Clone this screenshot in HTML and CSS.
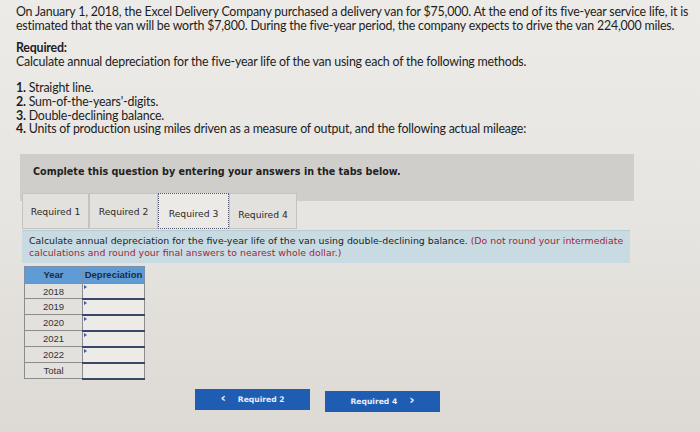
FILE: index.html
```html
<!DOCTYPE html>
<html>
<head>
<meta charset="utf-8">
<link rel="stylesheet" href="styles.css">
</head>
<body>
<div class="page">
  <div class="intro">
    <p class="para">On January 1, 2018, the Excel Delivery Company purchased a delivery van for $75,000. At the end of its five-year service life, it is<br>estimated that the van will be worth $7,800. During the five-year period, the company expects to drive the van 224,000 miles.</p>
    <p class="req"><b>Required:</b><br>Calculate annual depreciation for the five-year life of the van using each of the following methods.</p>
    <ol class="list">
      <li><b>1.</b> Straight line.</li>
      <li><b>2.</b> Sum-of-the-years'-digits.</li>
      <li><b>3.</b> Double-declining balance.</li>
      <li><b>4.</b> Units of production using miles driven as a measure of output, and the following actual mileage:</li>
    </ol>
  </div>
  <div class="banner">Complete this question by entering your answers in the tabs below.</div>
  <div class="tabs">
    <div class="tab">Required 1</div>
    <div class="tab">Required 2</div>
    <div class="tab active">Required 3</div>
    <div class="tab">Required 4</div>
  </div>
  <div class="instr">
    <div class="ln">Calculate annual depreciation for the five-year life of the van using double-declining balance. <span class="red">(Do not round your intermediate</span></div>
    <div class="ln red">calculations and round your final answers to nearest whole dollar.)</div>
  </div>
  <table class="grid">
    <thead><tr><th class="yr">Year</th><th class="dep">Depreciation</th></tr></thead>
    <tbody>
      <tr><td class="yr">2018</td><td class="in"><span class="flag"></span></td></tr>
      <tr><td class="yr">2019</td><td class="in"><span class="flag"></span></td></tr>
      <tr><td class="yr">2020</td><td class="in"><span class="flag"></span></td></tr>
      <tr><td class="yr">2021</td><td class="in"><span class="flag"></span></td></tr>
      <tr><td class="yr">2022</td><td class="in"><span class="flag"></span></td></tr>
      <tr><td class="yr">Total</td><td class="in"></td></tr>
    </tbody>
  </table>
  <div class="nav">
    <div class="btn"><span class="chev">&lsaquo;</span>Required 2</div>
    <div class="btn">Required 4<span class="chev r">&rsaquo;</span></div>
  </div>
</div>
</body>
</html>
```
FILE: styles.css
```css
html, body {
  margin: 0;
  padding: 0;
}
body {
  width: 700px;
  height: 432px;
  overflow: hidden;
  background: linear-gradient(180deg, #ecebe8 0%, #e7e5e1 50%, #ddd9d4 100%);
  font-family: "Lato", "Open Sans", sans-serif;
  color: #1d1d1d;
}
.page {
  padding: 5px 0 0 16px;
}
.intro {
  font-size: 12.4px;
  letter-spacing: -0.2px;
  line-height: 13.6px;
  width: 684px;
  white-space: nowrap;
}
.para {
  margin: 0;
}
.req {
  margin: 9px 0 0 0;
}
.list {
  list-style: none;
  margin: 13px 0 0 0;
  padding: 0;
}
.banner {
  margin: 18px 0 0 4px;
  width: 614px;
  height: 47px;
  box-sizing: border-box;
  padding: 12px 0 0 13px;
  background: #cfcecb;
  font-family: "DejaVu Sans", Verdana, sans-serif;
  font-weight: bold;
  font-size: 9.6px;
  color: #222;
}
.tabs {
  display: flex;
  margin: -8px 0 0 6px;
  height: 37px;
}
.tab {
  box-sizing: border-box;
  height: 36px;
  padding: 12px 0 0 0;
  text-align: center;
  border: 1px solid #c6c3bf;
  background: #e3e1dd;
  font-family: "DejaVu Sans", Verdana, sans-serif;
  font-size: 9.2px;
  color: #2a2a2a;
}
.tab:nth-child(1) { width: 67px; }
.tab:nth-child(2) { width: 69px; }
.tab:nth-child(3) { width: 71px; }
.tab:nth-child(4) { width: 68px; padding-top: 15px; }
.tab.active {
  border: 1.5px dotted #555a70;
  background: #eceae6;
  padding-top: 14px;
}
.instr {
  margin: 0 0 0 6px;
  width: 608px;
  box-sizing: border-box;
  padding: 4px 6px 4px 7px;
  background: #c9dbe2;
  border-top: 1px solid #b9ccd4;
  font-family: "DejaVu Sans", Verdana, sans-serif;
  font-size: 9.4px;
  line-height: 12px;
  color: #222;
  white-space: nowrap;
}
.red {
  color: #a1263a;
}
.grid {
  margin: 3px 0 0 8px;
  border-collapse: collapse;
  font-family: "Liberation Sans", Arial, sans-serif;
  font-size: 9.5px;
}
.grid th {
  background: #5f9cd6;
  height: 16px;
  padding: 0;
  font-weight: bold;
  color: #1c2a40;
  border: 1px solid #7c8fa8;
}
.grid th.yr { width: 57px; }
.grid th.dep { width: 61px; }
.grid td {
  height: 14px;
  padding: 0;
  text-align: center;
  color: #333;
}
.grid td.yr {
  background: #e3e1dd;
  border: 1px solid #8d8c8a;
}
.grid td.in {
  background: #ecebe8;
  border: 1px solid #8d8c8a;
  border-bottom: 2px solid #3a4766;
  position: relative;
}
.flag {
  position: absolute;
  left: 1px;
  top: 1px;
  width: 0;
  height: 0;
  border-top: 2px solid transparent;
  border-bottom: 2px solid transparent;
  border-left: 3px solid #3a5ea8;
}
.nav {
  display: flex;
  gap: 15px;
  margin: 9px 0 0 179px;
}
.btn {
  width: 115px;
  height: 21px;
  box-sizing: border-box;
  background: #1e5db2;
  color: #e9eef8;
  font-family: "DejaVu Sans", Verdana, sans-serif;
  font-weight: bold;
  font-size: 7.6px;
  display: flex;
  align-items: center;
  justify-content: center;
  gap: 12px;
}
.btn:nth-child(2) { margin-top: 2px; }
.chev {
  font-size: 13px;
  font-weight: bold;
  line-height: 10px;
  margin-top: -2px;
}
```
